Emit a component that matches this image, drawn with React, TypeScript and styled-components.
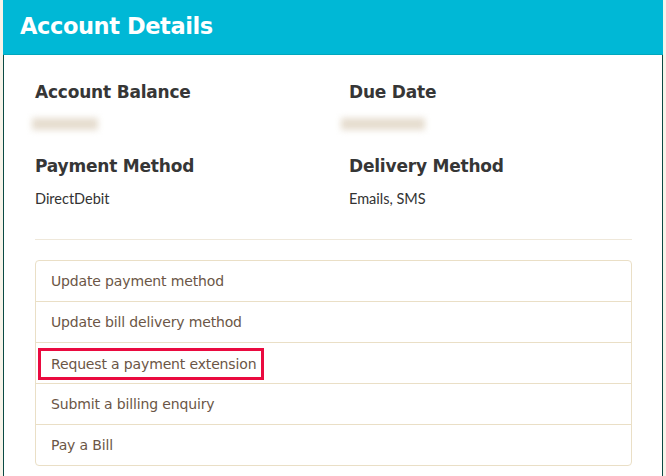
import styled, { createGlobalStyle } from 'styled-components';

const GlobalStyle = createGlobalStyle`
  body {
    margin: 0;
    background: #f7f3e9;
  }
`;

const Card = styled.div`
  width: 660px;
  margin-left: 3px;
  background: #ffffff;
`;

const Header = styled.div`
  height: 55px;
  display: flex;
  align-items: center;
  padding-left: 17px;
  padding-bottom: 3px;
  box-sizing: border-box;
  background: #00b8d6;
  border-bottom: 1px solid #00a7bd;
  color: #ffffff;
  font-family: 'DejaVu Sans', sans-serif;
  font-weight: 700;
  font-size: 22.5px;
  letter-spacing: -0.4px;
`;

const Body = styled.div`
  border-left: 1px solid #0b4a44;
  border-right: 1px solid #0b4a44;
  padding: 25px 30px 10px 31px;
  height: 421px;
  box-sizing: border-box;
`;

const InfoGrid = styled.div`
  display: grid;
  grid-template-columns: 1fr 1fr;
  column-gap: 31px;
  row-gap: 24px;
`;

const Field = styled.div`
  display: flex;
  flex-direction: column;
`;

const Label = styled.div`
  font-family: 'DejaVu Sans', sans-serif;
  font-weight: 700;
  font-size: 17px;
  letter-spacing: -0.2px;
  color: #363636;
  line-height: 24px;
`;

const Value = styled.div`
  margin-top: 12px;
  font-family: Lato, sans-serif;
  font-size: 14.5px;
  color: #333333;
  line-height: 18px;
`;

const Hidden = styled.div<{ $width: number; $shift: number }>`
  margin-top: 14px;
  margin-left: ${(p) => p.$shift}px;
  width: ${(p) => p.$width}px;
  height: 12px;
  background: #e6ddcf;
  filter: blur(3px);
`;

const Divider = styled.hr`
  margin: 31px 0 20px;
  border: none;
  border-top: 1px solid #efe8da;
`;

const ActionList = styled.ul`
  list-style: none;
  margin: 0;
  padding: 0;
  border: 1px solid #eadfc6;
  border-radius: 4px;
`;

const ActionItem = styled.li`
  height: 41px;
  display: flex;
  align-items: center;
  padding-left: 15px;
  box-sizing: border-box;
  border-top: 1px solid #eadfc6;
  font-family: 'DejaVu Sans', sans-serif;
  font-size: 14px;
  letter-spacing: -0.15px;
  color: #6b5646;
  &:first-child {
    border-top: none;
    height: 40px;
  }
`;

const Highlight = styled.span`
  margin-left: -13px;
  margin-top: 2px;
  padding: 5px 5px 5px 10px;
  border: 3px solid #ea0a3f;
`;

const actions = [
  'Update payment method',
  'Update bill delivery method',
  'Request a payment extension',
  'Submit a billing enquiry',
  'Pay a Bill',
];

export default function App() {
  return (
    <>
      <GlobalStyle />
      <Card>
        <Header>Account Details</Header>
        <Body>
          <InfoGrid>
            <Field>
              <Label>Account Balance</Label>
              <Hidden $width={66} $shift={-3} />
            </Field>
            <Field>
              <Label>Due Date</Label>
              <Hidden $width={84} $shift={-8} />
            </Field>
            <Field>
              <Label>Payment Method</Label>
              <Value>DirectDebit</Value>
            </Field>
            <Field>
              <Label>Delivery Method</Label>
              <Value>Emails, SMS</Value>
            </Field>
          </InfoGrid>
          <Divider />
          <ActionList>
            {actions.map((a, i) => (
              <ActionItem key={a}>
                {i === 2 ? <Highlight>{a}</Highlight> : a}
              </ActionItem>
            ))}
          </ActionList>
        </Body>
      </Card>
    </>
  );
}
